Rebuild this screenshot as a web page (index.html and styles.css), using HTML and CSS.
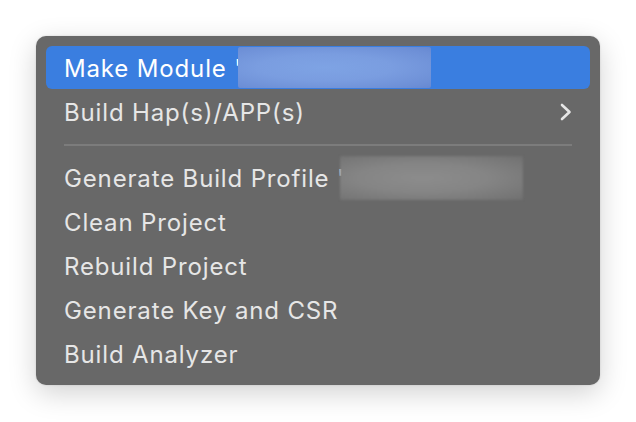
FILE: index.html
```html
<!DOCTYPE html>
<html>
<head>
<meta charset="utf-8">
<link rel="stylesheet" href="styles.css">
</head>
<body>
<div class="menu">
  <div class="item active"><span class="label">Make Module '</span><span class="blur blur-blue"></span></div>
  <div class="item"><span class="label">Build Hap(s)/APP(s)</span>
    <svg class="chev" width="14" height="20" viewBox="0 0 14 20"><path d="M3 3 L10.5 10 L3 17" fill="none" stroke="#e6e6e6" stroke-width="2.6" stroke-linecap="round" stroke-linejoin="round"/></svg>
  </div>
  <div class="sep"></div>
  <div class="item"><span class="label">Generate Build Profile '</span><span class="blur blur-gray"></span></div>
  <div class="item"><span class="label">Clean Project</span></div>
  <div class="item"><span class="label">Rebuild Project</span></div>
  <div class="item"><span class="label">Generate Key and CSR</span></div>
  <div class="item"><span class="label">Build Analyzer</span></div>
</div>
</body>
</html>
```
FILE: styles.css
```css
html, body {
  margin: 0;
  padding: 0;
  background: #ffffff;
  width: 636px;
  height: 422px;
  overflow: hidden;
}
body {
  padding: 36px 0 0 36px;
  box-sizing: border-box;
  font-family: Inter, "Noto Sans", sans-serif;
}
.menu {
  width: 564px;
  height: 349px;
  box-sizing: border-box;
  background: #686868;
  border-radius: 10px;
  padding: 10px 10px 9px 10px;
  box-shadow: 0 8px 28px rgba(0,0,0,0.18), 0 0 2px rgba(0,0,0,0.15);
  display: flex;
  flex-direction: column;
}
.item {
  height: 44px;
  display: flex;
  align-items: center;
  padding: 0 18px 0 18px;
  border-radius: 6px;
  color: #e6e6e6;
  font-size: 24px;
  letter-spacing: 0.85px;
  position: relative;
}
.item.active {
  background: #3a7ee0;
  color: #ffffff;
  height: 43px;
  margin-bottom: 1px;
}
.label {
  white-space: pre;
  padding-top: 1px;
}
.chev {
  margin-left: auto;
  margin-right: -1px;
}
.sep {
  height: 22px;
  display: flex;
  align-items: center;
  padding: 0 18px;
}
.sep::before {
  content: "";
  flex: 1;
  height: 2px;
  background: #7c7c7c;
}
.blur {
  display: inline-block;
  height: 41px;
  border-radius: 2px;
}
.blur-blue {
  width: 193px;
  margin-left: -4px;
  background: radial-gradient(ellipse at 45% 50%, #7ea3e4 0%, #7a9de0 45%, #6d8fd6 85%, #6688d2 100%);
  filter: blur(0.6px);
}
.blur-gray {
  width: 183px;
  height: 44px;
  margin-left: -5px;
  background: radial-gradient(ellipse at 45% 50%, #8c8c8c 0%, #858585 45%, #767676 85%, #707070 100%);
  filter: blur(1px);
}
```
